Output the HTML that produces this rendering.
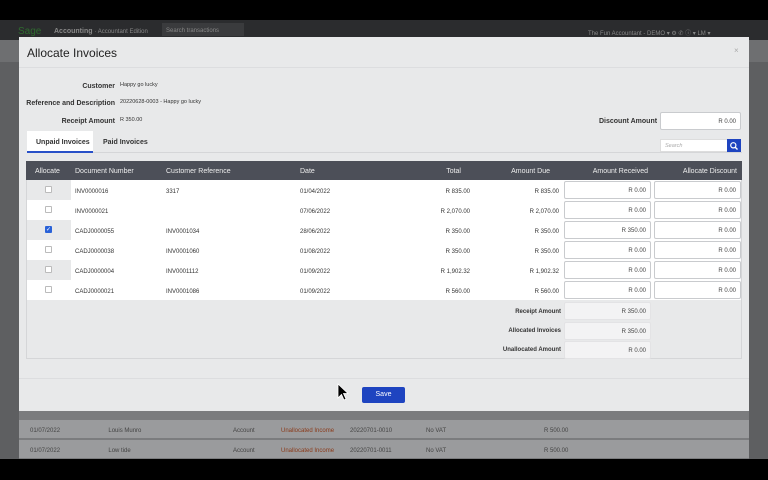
<!DOCTYPE html>
<html><head><style>
*{margin:0;padding:0;box-sizing:border-box}
body{width:768px;height:480px;overflow:hidden;background:#000;font-family:"Liberation Sans",sans-serif;position:relative}
.a{position:absolute}
.t{position:absolute;font-size:7px;color:#333;white-space:nowrap;margin-top:1.5px}
.r{text-align:right}
.inp{position:absolute;background:#fff;border:1px solid #c9cbce;border-radius:2px;font-size:6px;color:#444;text-align:right;padding-right:4px;line-height:18px;height:18px}
.cb{position:absolute;width:7px;height:7px;border:1px solid #bbb;background:#fff;border-radius:1px}
</style></head><body>
<div class="a" style="left:0;top:20px;width:768px;height:20px;background:#2b2c2e"></div>
<div class="t" style="left:18px;top:24px;color:#2f6b2f;font-size:10px">Sage</div>
<div class="t" style="left:54px;top:26px;color:#888;font-size:7px;font-weight:bold">Accounting <span style="font-weight:normal;font-size:6px">· Accountant Edition</span></div>
<div class="a" style="left:162px;top:23px;width:82px;height:13px;background:#3a3b3d"></div>
<div class="t" style="left:166px;top:26px;color:#888;font-size:6px">Search transactions</div>
<div class="t" style="left:588px;top:26px;color:#888;font-size:6px">The Fun Accountant - DEMO ▾ ⚙ ✆ ⓘ ▾ LM ▾</div>
<div class="a" style="left:0;top:40px;width:768px;height:22px;background:#6e6f71"></div>
<div class="a" style="left:0;top:62px;width:768px;height:397px;background:#5e5f61"></div>
<div class="a" style="left:19px;top:411px;width:730px;height:48px;background:#7b7c7e"></div>
<div class="a" style="left:19px;top:420px;width:730px;height:18px;background:#9a9b9d"></div>
<div class="a" style="left:19px;top:440px;width:730px;height:18px;background:#9a9b9d"></div>
<div class="t" style="left:30px;top:426px;color:#444;font-size:6px">01/07/2022 &nbsp;&nbsp;&nbsp;&nbsp;&nbsp;&nbsp;&nbsp;&nbsp;&nbsp;&nbsp;&nbsp;&nbsp;&nbsp;&nbsp;&nbsp;&nbsp;&nbsp;&nbsp;&nbsp;&nbsp;&nbsp;&nbsp;&nbsp;&nbsp;&nbsp;&nbsp;&nbsp; Louis Munro</div>
<div class="t" style="left:30px;top:446px;color:#444;font-size:6px">01/07/2022 &nbsp;&nbsp;&nbsp;&nbsp;&nbsp;&nbsp;&nbsp;&nbsp;&nbsp;&nbsp;&nbsp;&nbsp;&nbsp;&nbsp;&nbsp;&nbsp;&nbsp;&nbsp;&nbsp;&nbsp;&nbsp;&nbsp;&nbsp;&nbsp;&nbsp;&nbsp;&nbsp; Low tide</div>
<div class="t" style="left:233px;top:426px;color:#444;font-size:6px">Account</div><div class="t" style="left:233px;top:446px;color:#444;font-size:6px">Account</div>
<div class="t" style="left:281px;top:426px;color:#8a3a1a;font-size:6px">Unallocated Income</div><div class="t" style="left:281px;top:446px;color:#8a3a1a;font-size:6px">Unallocated Income</div>
<div class="t" style="left:350px;top:426px;color:#444;font-size:6px">20220701-0010</div><div class="t" style="left:350px;top:446px;color:#444;font-size:6px">20220701-0011</div>
<div class="t" style="left:426px;top:426px;color:#444;font-size:6px">No VAT</div><div class="t" style="left:426px;top:446px;color:#444;font-size:6px">No VAT</div>
<div class="t" style="left:544px;top:426px;color:#444;font-size:6px">R 500.00</div><div class="t" style="left:544px;top:446px;color:#444;font-size:6px">R 500.00</div>

<div class="a" style="left:19px;top:37px;width:730px;height:374px;background:#e8e9ea"></div>
<div class="t" style="left:27px;top:44px;font-size:12px;color:#222">Allocate Invoices</div>
<div class="t" style="left:734px;top:44px;font-size:8px;color:#aaa">×</div>
<div class="a" style="left:19px;top:67px;width:730px;height:1px;background:#dcdddf"></div>
<div class="t r" style="left:20px;width:95px;top:81px;font-size:7px;font-weight:bold;color:#333">Customer</div>
<div class="t" style="left:120px;top:80px;font-size:5.5px">Happy go lucky</div>
<div class="t r" style="left:20px;width:95px;top:98px;font-size:7px;font-weight:bold;color:#333">Reference and Description</div>
<div class="t" style="left:120px;top:97px;font-size:5.5px">20220628-0003 - Happy go lucky</div>
<div class="t r" style="left:20px;width:95px;top:116px;font-size:7px;font-weight:bold;color:#333">Receipt Amount</div>
<div class="t" style="left:120px;top:115px;font-size:5.5px">R 350.00</div>
<div class="t" style="left:599px;top:116px;font-size:7px;font-weight:bold;color:#333">Discount Amount</div>
<div class="inp" style="left:660px;top:112px;width:81px">R 0.00</div>
<div class="a" style="left:27px;top:152px;width:715px;height:1px;background:#d5d6d8"></div>
<div class="a" style="left:27px;top:131px;width:66px;height:22px;background:#fff;border-bottom:2px solid #2850c8"></div>
<div class="t" style="left:36px;top:137px;font-size:7px;font-weight:bold">Unpaid Invoices</div>
<div class="t" style="left:103px;top:137px;font-size:7px;font-weight:bold">Paid Invoices</div>
<div class="a" style="left:660px;top:139px;width:68px;height:13px;background:#fff;border:1px solid #ddd"></div>
<div class="t" style="left:665px;top:141px;font-size:5.5px;color:#aaa;font-style:italic">Search</div>
<div class="a" style="left:727px;top:139px;width:14px;height:13px;background:#1e44c0"></div>
<svg class="a" style="left:729px;top:141px" width="10" height="10"><circle cx="4.3" cy="4.3" r="2.6" fill="none" stroke="#fff" stroke-width="1.2"/><path d="M6.2 6.2L8.5 8.5" stroke="#fff" stroke-width="1.4"/></svg>

<div class="a" style="left:26px;top:161px;width:716px;height:198px;background:#fff;border:1px solid #d5d6d8"></div>
<div class="a" style="left:26px;top:161px;width:716px;height:19px;background:#4c4f58"></div>
<div class="t" style="left:35px;top:166px;color:#eee">Allocate</div>
<div class="t" style="left:75px;top:166px;color:#eee">Document Number</div>
<div class="t" style="left:166px;top:166px;color:#eee">Customer Reference</div>
<div class="t" style="left:300px;top:166px;color:#eee">Date</div>
<div class="t r" style="left:400px;width:61px;top:166px;color:#eee">Total</div>
<div class="t r" style="left:480px;width:70px;top:166px;color:#eee">Amount Due</div>
<div class="t r" style="left:560px;width:88px;top:166px;color:#eee">Amount Received</div>
<div class="t r" style="left:650px;width:87px;top:166px;color:#eee">Allocate Discount</div>
<div class="a" style="left:27px;top:180px;width:44px;height:20px;background:#e8e9ea"></div>
<div class="a" style="left:27px;top:220px;width:44px;height:20px;background:#e8e9ea"></div>
<div class="a" style="left:27px;top:260px;width:44px;height:20px;background:#e8e9ea"></div>
<div class="a" style="left:27px;top:300px;width:714px;height:58px;background:#e8e9ea"></div>

<div class="cb" style="left:45px;top:186px"></div>
<div class="t" style="left:75px;top:187px;font-size:6px">INV0000016</div><div class="t" style="left:166px;top:187px;font-size:6px">3317</div><div class="t" style="left:300px;top:187px;font-size:6px">01/04/2022</div>
<div class="t r" style="left:400px;width:70px;top:187px;font-size:6px">R 835.00</div><div class="t r" style="left:480px;width:79px;top:187px;font-size:6px">R 835.00</div>
<div class="inp" style="left:564px;top:181px;width:87px">R 0.00</div><div class="inp" style="left:654px;top:181px;width:87px">R 0.00</div>

<div class="cb" style="left:45px;top:206px"></div>
<div class="t" style="left:75px;top:207px;font-size:6px">INV0000021</div><div class="t" style="left:300px;top:207px;font-size:6px">07/06/2022</div>
<div class="t r" style="left:400px;width:70px;top:207px;font-size:6px">R 2,070.00</div><div class="t r" style="left:480px;width:79px;top:207px;font-size:6px">R 2,070.00</div>
<div class="inp" style="left:564px;top:201px;width:87px">R 0.00</div><div class="inp" style="left:654px;top:201px;width:87px">R 0.00</div>

<div class="cb" style="left:45px;top:226px;background:#2a62d8;border-color:#2a62d8"></div>
<div class="t" style="left:46px;top:224px;font-size:6px;color:#fff">✓</div>
<div class="t" style="left:75px;top:227px;font-size:6px">CADJ0000055</div><div class="t" style="left:166px;top:227px;font-size:6px">INV0001034</div><div class="t" style="left:300px;top:227px;font-size:6px">28/06/2022</div>
<div class="t r" style="left:400px;width:70px;top:227px;font-size:6px">R 350.00</div><div class="t r" style="left:480px;width:79px;top:227px;font-size:6px">R 350.00</div>
<div class="inp" style="left:564px;top:221px;width:87px">R 350.00</div><div class="inp" style="left:654px;top:221px;width:87px">R 0.00</div>

<div class="cb" style="left:45px;top:246px"></div>
<div class="t" style="left:75px;top:247px;font-size:6px">CADJ0000038</div><div class="t" style="left:166px;top:247px;font-size:6px">INV0001060</div><div class="t" style="left:300px;top:247px;font-size:6px">01/08/2022</div>
<div class="t r" style="left:400px;width:70px;top:247px;font-size:6px">R 350.00</div><div class="t r" style="left:480px;width:79px;top:247px;font-size:6px">R 350.00</div>
<div class="inp" style="left:564px;top:241px;width:87px">R 0.00</div><div class="inp" style="left:654px;top:241px;width:87px">R 0.00</div>

<div class="cb" style="left:45px;top:266px"></div>
<div class="t" style="left:75px;top:267px;font-size:6px">CADJ0000004</div><div class="t" style="left:166px;top:267px;font-size:6px">INV0001112</div><div class="t" style="left:300px;top:267px;font-size:6px">01/09/2022</div>
<div class="t r" style="left:400px;width:70px;top:267px;font-size:6px">R 1,902.32</div><div class="t r" style="left:480px;width:79px;top:267px;font-size:6px">R 1,902.32</div>
<div class="inp" style="left:564px;top:261px;width:87px">R 0.00</div><div class="inp" style="left:654px;top:261px;width:87px">R 0.00</div>

<div class="cb" style="left:45px;top:286px"></div>
<div class="t" style="left:75px;top:287px;font-size:6px">CADJ0000021</div><div class="t" style="left:166px;top:287px;font-size:6px">INV0001086</div><div class="t" style="left:300px;top:287px;font-size:6px">01/09/2022</div>
<div class="t r" style="left:400px;width:70px;top:287px;font-size:6px">R 560.00</div><div class="t r" style="left:480px;width:79px;top:287px;font-size:6px">R 560.00</div>
<div class="inp" style="left:564px;top:281px;width:87px">R 0.00</div><div class="inp" style="left:654px;top:281px;width:87px">R 0.00</div>

<div class="t r" style="left:440px;width:121px;top:307px;font-size:6px;font-weight:bold">Receipt Amount</div>
<div class="inp" style="left:564px;top:302px;width:87px;background:#f3f3f4;border-color:#e3e3e5">R 350.00</div>
<div class="t r" style="left:440px;width:121px;top:326px;font-size:6px;font-weight:bold">Allocated Invoices</div>
<div class="inp" style="left:564px;top:322px;width:87px;background:#f3f3f4;border-color:#e3e3e5">R 350.00</div>
<div class="t r" style="left:440px;width:121px;top:345px;font-size:6px;font-weight:bold">Unallocated Amount</div>
<div class="inp" style="left:564px;top:341px;width:87px;background:#f3f3f4;border-color:#e3e3e5">R 0.00</div>

<div class="a" style="left:19px;top:378px;width:730px;height:1px;background:#dcdddf"></div>
<div class="a" style="left:362px;top:387px;width:43px;height:16px;background:#1e44c0;border-radius:2px;color:#fff;font-size:7px;text-align:center;line-height:16px">Save</div>
<svg class="a" style="left:337px;top:383px" width="14" height="20"><path d="M1 1L1 15L4.5 11.5L7 17L9 16L6.5 10.5L11 10.5Z" fill="#000" stroke="#fff" stroke-width="0.8"/></svg>
</body></html>
